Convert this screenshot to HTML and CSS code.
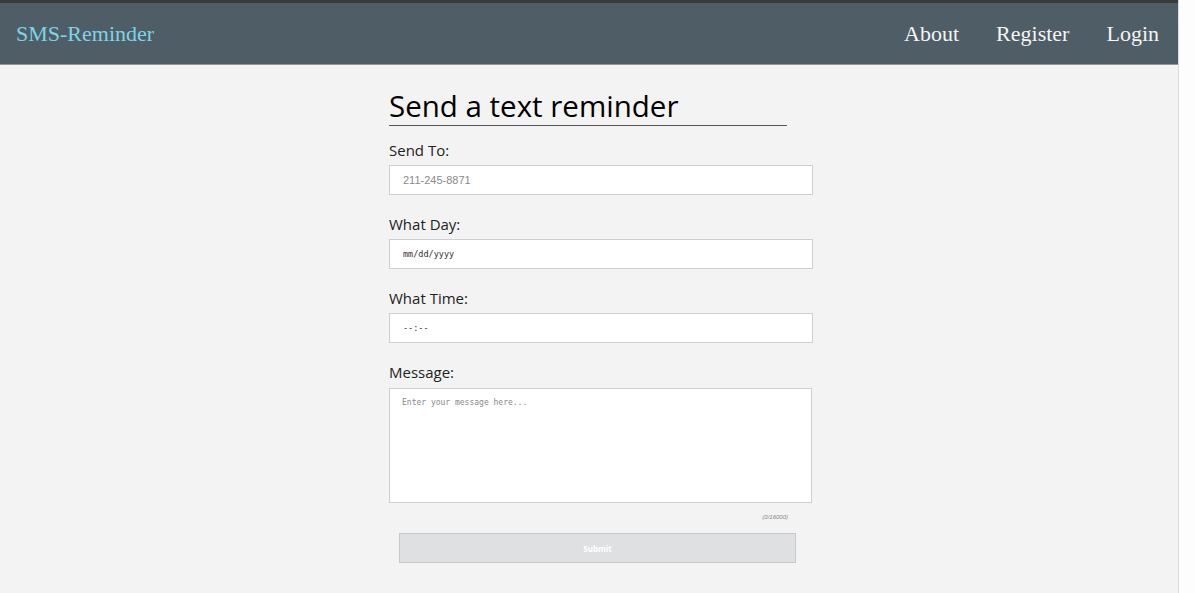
FILE: index.html
```html
<!DOCTYPE html>
<html>
	<head>
		<meta charset="utf-8">
		<title>SMS-Reminder</title>
		<link rel="stylesheet" href="styles.css">
	</head>
	<body>
		<div class="page">
			<div class="nav">
				<a class="brand" href="#">SMS-Reminder</a>
				<ul class="links">
					<li><a href="#">About</a></li>
					<li><a href="#">Register</a></li>
					<li><a href="#">Login</a></li>
				</ul>
			</div>
			<form class="reminder">
				<h1 class="title">Send a text reminder</h1>
				<label class="label">Send To:</label>
				<input class="field" type="text" placeholder="211-245-8871">
				<label class="label">What Day:</label>
				<input class="field mono" type="text" placeholder="mm/dd/yyyy">
				<label class="label">What Time:</label>
				<input class="field mono" type="text" placeholder="--:--">
				<label class="label">Message:</label>
				<textarea class="message" placeholder="Enter your message here..."></textarea>
				<div class="count">(0/16000)</div>
				<button type="button" class="submit">Submit</button>
			</form>
		</div>
		<div class="gutter"></div>
	</body>
</html>
```

FILE: styles.css
```css
*{
	margin: 0px;
	padding: 0px;
	box-sizing: border-box;
}
ul{
	list-style: none;
}
a{
	text-decoration: none;
}
body{
	display: flex;
	height: 593px;
	overflow: hidden;
	background: #fdfdfd;
	font-family: "Open Sans", sans-serif;
}
.page{
	width: 1178px;
	background: #f3f3f3;
	border-top: 3px solid #3b3b3b;
}
.gutter{
	flex: 1;
	border-left: 1px solid #dcdcdc;
}
.nav{
	height: 62px;
	background: #4f5e66;
	border-bottom: 1px solid #8d979c;
	display: flex;
	align-items: center;
	justify-content: space-between;
	padding: 0 19px 0 16px;
	font-family: "Liberation Serif", serif;
	font-size: 22px;
}
.nav .brand{
	color: #7fd3e6;
}
.nav .links{
	display: flex;
	gap: 37px;
}
.nav .links a{
	color: #f4f4f4;
}
.reminder{
	width: 425px;
	margin: 0 0 0 389px;
	display: flex;
	flex-direction: column;
	align-items: flex-start;
}
.title{
	width: 398px;
	margin-top: 22px;
	font-size: 29.5px;
	font-weight: 400;
	line-height: 38px;
	color: #000;
	border-bottom: 1px solid #555;
}
.label{
	font-size: 15px;
	line-height: 20px;
	color: #222;
	margin: 19px 0 5px;
}
.reminder .title + .label{
	margin-top: 14px;
}
.field{
	width: 424px;
	height: 30px;
	border: 1px solid #cfcfcf;
	background: #fff;
	padding-left: 13px;
	font-family: "Liberation Sans", sans-serif;
	font-size: 11px;
	outline: none;
}
.field::placeholder{
	color: #8a8a8a;
}
.field.mono{
	font-family: "DejaVu Sans Mono", monospace;
	font-size: 8.5px;
}
.field.mono::placeholder{
	color: #333;
}
.message{
	width: 423px;
	height: 115px;
	margin-top: 1px;
	border: 1px solid #cfcfcf;
	background: #fff;
	padding: 9px 12px;
	font-family: "DejaVu Sans Mono", monospace;
	font-size: 8px;
	resize: none;
	outline: none;
}
.message::placeholder{
	color: #888;
}
.count{
	align-self: flex-end;
	margin: 11px 26px 0 0;
	font-family: "Liberation Sans", sans-serif;
	font-size: 6px;
	font-style: italic;
	color: #888;
}
.submit{
	width: 397px;
	height: 30px;
	margin: 13px 0 0 10px;
	background: #dfe0e2;
	border: 1px solid #c8c8c8;
	color: #fff;
	font-family: "Open Sans", sans-serif;
	font-size: 8px;
	font-weight: 700;
}
```
